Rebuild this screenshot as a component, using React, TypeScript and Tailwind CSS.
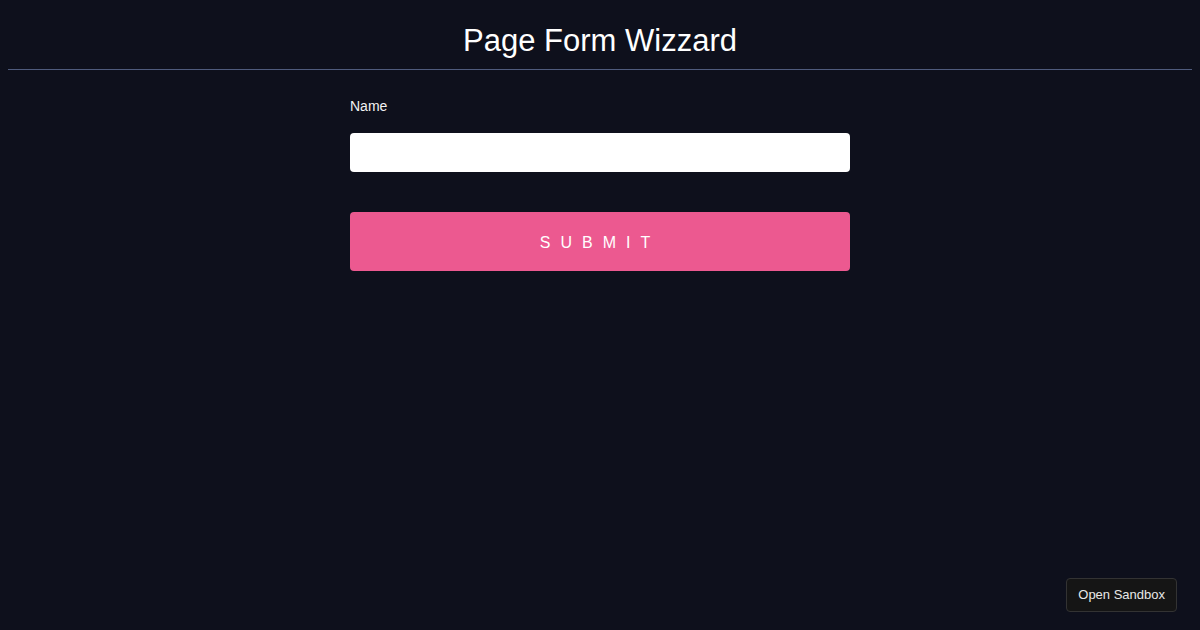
import React from "react";

export default function App() {
  return (
    <div className="w-[1200px] h-[630px] bg-[#0e101c] text-white relative overflow-hidden" style={{ fontFamily: '"Liberation Sans", Arial, sans-serif' }}>
      <div className="px-2">
        <h1 className="text-[31px] leading-none text-center pt-[25px] pb-[13px] font-normal">Page Form Wizzard</h1>
        <div className="h-px bg-[#4f5b7d]"></div>
      </div>
      <form className="w-[500px] mx-auto flex flex-col pt-[28px]">
        <label className="text-[14px] leading-[16px] text-[#f2f2f2]">Name</label>
        <input className="mt-[19px] h-[39px] bg-white rounded-[4px] w-full px-2 text-black outline-none" />
        <button type="button" className="mt-[40px] h-[59px] bg-[#ec5990] rounded-[4px] text-white text-[16px] tracking-[10px] uppercase pt-[3px]">
          Submit
        </button>
      </form>
      <div className="absolute right-[23px] bottom-[18px] h-[34px] px-[11px] flex items-center bg-[#151515] border border-[#333] rounded-[4px] text-[13px] text-[#e8e8e8]">
        Open Sandbox
      </div>
    </div>
  );
}
